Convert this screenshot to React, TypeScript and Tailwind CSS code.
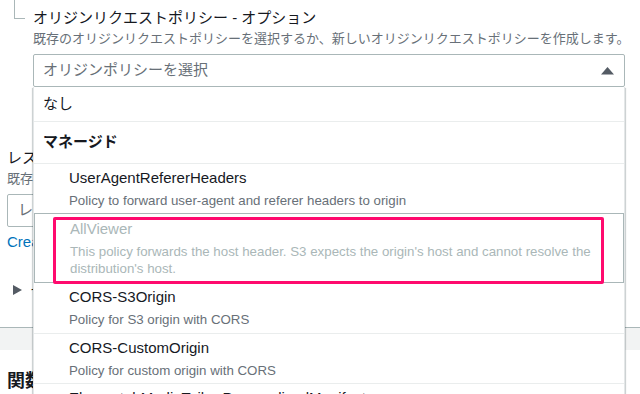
import React from 'react';

type Option = {
  label: string;
  desc: string;
  disabled?: boolean;
  highlighted?: boolean;
  className: string;
};

const managed: Option[] = [
  {
    label: 'UserAgentRefererHeaders',
    desc: 'Policy to forward user-agent and referer headers to origin',
    className: 'pt-[3px] pb-[4px]',
  },
  {
    label: 'AllViewer',
    desc: "This policy forwards the host header. S3 expects the origin's host and cannot resolve the distribution's host.",
    disabled: true,
    highlighted: true,
    className: 'pt-[4px] pb-[5px] border border-[#aab7b8]',
  },
  {
    label: 'CORS-S3Origin',
    desc: 'Policy for S3 origin with CORS',
    className: 'pt-[3px] pb-[5px]',
  },
  {
    label: 'CORS-CustomOrigin',
    desc: 'Policy for custom origin with CORS',
    className: 'pt-[3px] pb-[4px] border-t border-[#eaeded]',
  },
  {
    label: 'Elemental-MediaTailor-PersonalizedManifests',
    desc: 'Policy for Elemental MediaTailor personalized manifests',
    className: 'pt-[3px] pb-[4px] border-t border-[#eaeded]',
  },
];

function OptionRow({ opt }: { opt: Option }) {
  return (
    <div className={`relative pl-[35px] pr-[16px] ${opt.className}`}>
      <div className={`text-[15px] leading-[22px] ${opt.disabled ? 'text-[#aab7b8]' : 'text-[#16191f]'}`}>
        {opt.label}
      </div>
      <div className={`mt-[3px] text-[13.3px] leading-[17px] ${opt.disabled ? 'text-[#aab7b8]' : 'text-[#687078]'}`}>
        {opt.desc}
      </div>
      {opt.highlighted && (
        <div className="pointer-events-none absolute left-[18px] right-[19px] top-[3px] -bottom-[2px] rounded-[2px] border-[3px] border-[#ff0a6e]" />
      )}
    </div>
  );
}

export default function App() {
  return (
    <div className="relative h-[394px] w-[640px] overflow-hidden bg-white font-['Liberation_Sans','Noto_Sans_CJK_JP',sans-serif]">
      {/* upper card */}
      <div className="border-b border-[#aab7b8] pl-[7px] pb-[27px]">
        <div className="flex">
          <div className="w-[26px] shrink-0">
            <div className="ml-[7px] h-[19px] w-[11px] border-b border-l border-[#aab7b8]" />
          </div>
          <div className="w-[592px]">
            <div className="pt-[7px] text-[15px] leading-[22px] text-[#16191f]">
              オリジンリクエストポリシー - オプション
            </div>
            <div className="mt-[2px] whitespace-nowrap text-[13px] leading-[16px] text-[#687078]">
              既存のオリジンリクエストポリシーを選択するか、新しいオリジンリクエストポリシーを作成します。
            </div>
            <div className="relative z-10 mt-[7px]">
              <div className="flex h-[33px] items-center justify-between rounded-[2px] border border-[#aab7b8] pl-[9px] pr-[10px]">
                <span className="text-[15px] text-[#687078]">オリジンポリシーを選択</span>
                <svg width="13" height="8" viewBox="0 0 13 8" className="mt-[1px]">
                  <polygon points="0,7.5 6.5,0 13,7.5" fill="#545b64" />
                </svg>
              </div>
              {/* open menu */}
              <div className="absolute left-0 right-0 top-[33px] border-x border-[#e4e7e8] bg-white shadow-[0_1px_1px_0_rgba(0,28,36,0.3),1px_1px_1px_0_rgba(0,28,36,0.15),-1px_1px_1px_0_rgba(0,28,36,0.15)]">
                <div className="flex h-[35px] items-center border-b border-[#eaeded] pl-[9px] text-[15px] text-[#16191f]">
                  なし
                </div>
                <div className="flex h-[42px] items-center border-b border-[#eaeded] pl-[9px] text-[15px] font-bold text-[#16191f]">
                  マネージド
                </div>
                {managed.map((opt) => (
                  <OptionRow key={opt.label} opt={opt} />
                ))}
              </div>
            </div>
          </div>
        </div>

        <div className="mt-[60px] text-[15px] leading-[22px] text-[#16191f]">
          レスポンスヘッダーポリシー - オプション
        </div>
        <div className="mt-[2px] whitespace-nowrap text-[13px] leading-[16px] text-[#687078]">
          既存のレスポンスヘッダーポリシーを選択するか、新しいレスポンスヘッダーポリシーを作成します。
        </div>
        <div className="mt-[7px] flex h-[33px] w-[617px] items-center rounded-[2px] border border-[#aab7b8] pl-[10px]">
          <span className="text-[15px] text-[#687078]">レスポンスヘッダーポリシーを選択</span>
        </div>
        <div className="mt-[5px] text-[15px] leading-[20px] text-[#0073bb]">Create response headers policy</div>
        <div className="mt-[28px] flex h-[20px] items-center gap-[8px] pl-[6px]">
          <svg width="9" height="10" viewBox="0 0 9 10">
            <polygon points="0,0 9,5 0,10" fill="#545b64" />
          </svg>
          <span className="text-[15px] text-[#16191f]">その他の設定</span>
        </div>
      </div>

      {/* page gap */}
      <div className="h-[22px] bg-[#f2f3f3]" />

      {/* lower card */}
      <div className="pl-[7px] pt-[19px]">
        <div className="text-[18px] font-bold leading-[24px] text-[#16191f]">関数の関連付け</div>
      </div>
    </div>
  );
}
